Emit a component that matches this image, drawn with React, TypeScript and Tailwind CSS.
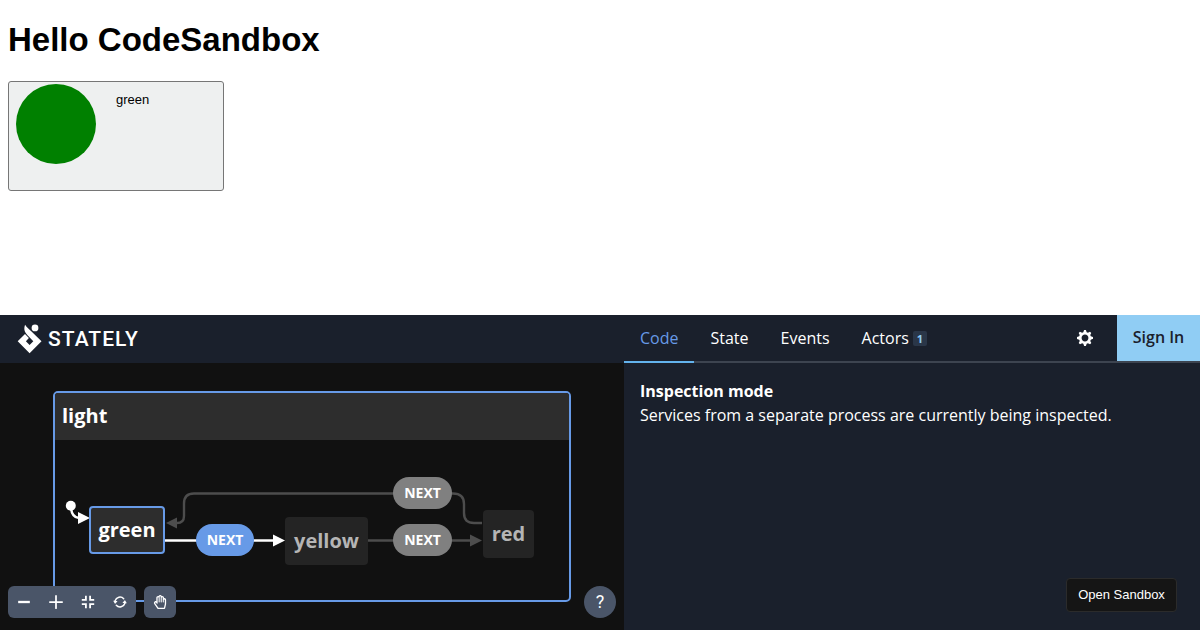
import type { ReactNode } from "react";
import { FaRegHandPaper } from "react-icons/fa";

function StatelyMark() {
  return (
    <svg viewBox="0 0 25 30" className="h-[30px] w-[25px] shrink-0 fill-white" aria-hidden="true">
      <circle cx="18" cy="3.900" r="3.400" />
      <path d="M8.100 0.800 C9.600 3.400 11.800 5 14 7 L24.500 17.300 L12.600 29.200 L0.700 17.300 L8 10 L11.900 13.900 L8.900 17.200 L12.600 20.900 L16.300 17.200 L10.500 11.200 C7 7.700 6.800 4.400 8.100 0.800 Z" />
    </svg>
  );
}

function SettingsIcon() {
  return (
    <svg viewBox="0 0 14 14" className="size-4 fill-current" aria-hidden="true">
      <path d="M14,7.77 L14,6.17 L12.06,5.53 L11.61,4.44 L12.49,2.6 L11.36,1.47 L9.55,2.38 L8.46,1.93 L7.77,0.01 L6.17,0.01 L5.54,1.95 L4.43,2.4 L2.59,1.52 L1.46,2.65 L2.37,4.46 L1.92,5.55 L0,6.23 L0,7.82 L1.94,8.46 L2.39,9.55 L1.51,11.39 L2.64,12.52 L4.45,11.61 L5.54,12.06 L6.23,13.98 L7.82,13.98 L8.45,12.04 L9.56,11.59 L11.4,12.47 L12.53,11.34 L11.61,9.53 L12.08,8.44 L14,7.75 L14,7.77 Z M7,10 C5.34,10 4,8.66 4,7 C4,5.34 5.34,4 7,4 C8.66,4 10,5.34 10,7 C10,8.66 8.66,10 7,10 Z" />
    </svg>
  );
}

function MinusIcon() {
  return (
    <svg viewBox="0 0 24 24" className="size-3.5 fill-current" aria-hidden="true">
      <rect x="2" y="10" width="20" height="4" />
    </svg>
  );
}

function AddIcon() {
  return (
    <svg viewBox="0 0 24 24" className="size-3.5 fill-current" aria-hidden="true">
      <path d="M0,12a1.5,1.5,0,0,0,1.5,1.5h8.75a.25.25,0,0,1,.25.25V22.5a1.5,1.5,0,0,0,3,0V13.75a.25.25,0,0,1,.25-.25H22.5a1.5,1.5,0,0,0,0-3H13.75a.25.25,0,0,1-.25-.25V1.5a1.5,1.5,0,0,0-3,0v8.75a.25.25,0,0,1-.25.25H1.5A1.5,1.5,0,0,0,0,12Z" />
    </svg>
  );
}

function FitIcon() {
  return (
    <svg viewBox="0 0 14 14" className="size-3.5 fill-none stroke-current" strokeWidth="1.800" aria-hidden="true">
      <path d="M4.900 0.800v4.100H0.800M9.100 0.800v4.100h4.100M4.900 13.200V9.100H0.800M9.100 13.200V9.100h4.100" />
    </svg>
  );
}

function RepeatIcon() {
  return (
    <svg viewBox="0 0 24 24" className="size-3.5 fill-current" aria-hidden="true">
      <path d="M10.319,4.936a7.239,7.239,0,0,1,7.1,2.252,1.25,1.25,0,1,0,1.872-1.657A9.737,9.737,0,0,0,9.743,2.5,10.269,10.269,0,0,0,2.378,9.61a.249.249,0,0,1-.271.178l-1.033-.13A.491.491,0,0,0,.6,9.877a.5.5,0,0,0-.019.526l2.476,4.342a.5.5,0,0,0,.373.248.43.43,0,0,0,.062,0,.5.5,0,0,0,.359-.152l3.477-3.593a.5.5,0,0,0-.3-.844L5.15,10.172a.25.25,0,0,1-.2-.333A7.7,7.7,0,0,1,10.319,4.936Z" />
      <path d="M23.406,14.1a.5.5,0,0,0,.015-.526l-2.5-4.329A.5.5,0,0,0,20.546,9a.489.489,0,0,0-.421.151l-3.456,3.614a.5.5,0,0,0,.3.842l1.848.221a.249.249,0,0,1,.183.117.253.253,0,0,1,.023.216,7.688,7.688,0,0,1-5.369,4.9,7.243,7.243,0,0,1-7.1-2.253,1.25,1.25,0,1,0-1.872,1.656,9.74,9.74,0,0,0,9.549,3.03,10.261,10.261,0,0,0,7.369-7.12.251.251,0,0,1,.27-.179l1.058.127a.422.422,0,0,0,.06,0A.5.5,0,0,0,23.406,14.1Z" />
    </svg>
  );
}

function ToolButton({ label, children }: { label: string; children: ReactNode }) {
  return (
    <button type="button" aria-label={label} className="flex size-8 items-center justify-center">
      {children}
    </button>
  );
}

const eventPill =
  "absolute flex h-8 items-center justify-center rounded-full text-sm leading-5 font-bold text-white";
const stateNode =
  "absolute flex h-12 items-center justify-center rounded text-xl leading-7 font-bold";

function Machine() {
  return (
    <>
      <section className="absolute top-7 left-[53px] h-[211px] w-[518px] rounded-[5px] border-2 border-[#679ae7]">
        <h2 className="flex h-[47px] items-center rounded-t-[3px] bg-[#2d2d2d] px-[7px] pb-0.5 text-xl font-bold text-white">
          light
        </h2>
      </section>
      <svg
        width="624"
        height="267"
        viewBox="0 363 624 267"
        className="absolute top-0 left-0 fill-none"
        strokeWidth="2.4"
        aria-hidden="true"
      >
        <g stroke="#4d4d4d">
          <path d="M482 523 H474 Q464 523 464 513 V504 Q464 493.500 453 493.500 H194 Q184 493.500 184 503.500 V516 Q184 523 177 523" />
          <path d="M368 540.500 H471" />
        </g>
        <g fill="#4d4d4d">
          <path d="M166 523 L177 517.500 V528.500 Z" />
          <path d="M482 540.500 L470 534.500 V546.500 Z" />
        </g>
        <g stroke="#fff">
          <path d="M165 540.500 H274" />
          <path d="M71 508 Q72 517.500 79 518" />
        </g>
        <g fill="#fff">
          <circle cx="70.800" cy="505.800" r="5" />
          <path d="M90 518 L78 512 V524 Z" />
          <path d="M285 540.500 L273 534.500 V546.500 Z" />
        </g>
      </svg>
      <div className={`${stateNode} top-[143px] left-[89px] w-[76px] border-2 border-[#679ae7] bg-[#2d2d2d] text-white`}>
        green
      </div>
      <div className={`${stateNode} top-[154px] left-[285px] w-[83px] bg-[#242424] text-[#b5b5b5]`}>yellow</div>
      <div className={`${stateNode} top-[147px] left-[483px] w-[51px] bg-[#242424] text-[#b5b5b5]`}>red</div>
      <button type="button" className={`${eventPill} top-[161px] left-[196px] w-[58px] bg-[#679ae7]`}>
        NEXT
      </button>
      <button type="button" className={`${eventPill} top-[114px] left-[393px] w-[59px] bg-[#808080]`}>
        NEXT
      </button>
      <button type="button" className={`${eventPill} top-[161px] left-[393px] w-[59px] bg-[#808080]`}>
        NEXT
      </button>
    </>
  );
}

function Tab({ active = false, children }: { active?: boolean; children: ReactNode }) {
  return (
    <button
      type="button"
      role="tab"
      aria-selected={active}
      className={
        active
          ? "-mb-0.5 flex items-center border-b-2 border-[#63b3ed] px-4 text-[#679ae7]"
          : "-mb-0.5 flex items-center border-b-2 border-transparent px-4"
      }
    >
      {children}
    </button>
  );
}

export default function App() {
  return (
    <div className="flex min-h-screen flex-col">
      <main className="min-h-[315px] flex-1 bg-white px-2 pt-[21px] font-['Liberation_Sans',sans-serif] text-black">
        <h1 className="text-[33px] leading-[38px] font-bold">Hello CodeSandbox</h1>
        <button
          type="button"
          className="mt-[22px] flex h-[110px] w-[216px] items-start gap-5 rounded-[3px] border border-[#767676] bg-[#eef0f0] px-[7px] py-0.5 text-[13px] leading-[15px]"
        >
          <span className="size-20 rounded-full bg-[#008000]" />
          <span className="pt-2">green</span>
        </button>
      </main>

      <div className="flex min-h-[315px] flex-1 font-['Open_Sans','Noto_Sans',sans-serif] text-base text-white">
        <div className="flex w-[52%] flex-col bg-[#111]">
          <header className="flex h-12 shrink-0 items-center bg-[#1a202c] pl-[17px]">
            <a href="#home" className="flex items-center gap-1.5" aria-label="Stately">
              <StatelyMark />
              <span className="font-['Roboto',sans-serif] text-[21px] leading-6 font-medium tracking-wider">
                STATELY
              </span>
            </a>
          </header>
          <div className="relative flex flex-1 items-end justify-between overflow-hidden p-2 pb-3">
            <Machine />
            <div className="relative flex gap-2">
              <div className="flex rounded-md bg-[#4a5568]">
                <ToolButton label="Zoom out">
                  <MinusIcon />
                </ToolButton>
                <ToolButton label="Zoom in">
                  <AddIcon />
                </ToolButton>
                <ToolButton label="Fit to view">
                  <FitIcon />
                </ToolButton>
                <ToolButton label="Reset view">
                  <RepeatIcon />
                </ToolButton>
              </div>
              <div className="flex rounded-md bg-[#4a5568]">
                <ToolButton label="Pan">
                  <FaRegHandPaper className="size-3.5" />
                </ToolButton>
              </div>
            </div>
            <button
              type="button"
              aria-label="Help"
              className="relative size-8 rounded-full bg-[#4a5568] font-['Roboto',sans-serif] text-lg"
            >
              ?
            </button>
          </div>
        </div>

        <div className="flex w-[48%] flex-col bg-[#1a202c]">
          <div className="flex h-12 shrink-0 border-b-2 border-[#3d4450]">
            <div role="tablist" className="flex">
              <Tab active>Code</Tab>
              <Tab>State</Tab>
              <Tab>Events</Tab>
              <Tab>
                Actors
                <span className="ml-1 rounded-xs bg-[#2a3648] px-1 text-[11px] leading-[15px] font-bold text-[#90cdf4]">
                  1
                </span>
              </Tab>
            </div>
            <button type="button" aria-label="Settings" className="mr-3 ml-auto flex w-10 items-center justify-center">
              <SettingsIcon />
            </button>
            <button type="button" className="w-[83px] bg-[#90cdf4] pb-0.5 font-semibold text-[#1a202c]">
              Sign In
            </button>
          </div>
          <div className="flex-1 p-4 leading-6">
            <p className="font-bold">Inspection mode</p>
            <p>Services from a separate process are currently being inspected.</p>
          </div>
          <div className="flex justify-end pr-[23px] pb-[18px]">
            <a
              href="#sandbox"
              className="flex h-[34px] w-[111px] items-center justify-center rounded border border-[#2b2b2b] bg-[#151515] font-['Liberation_Sans',sans-serif] text-[13px]"
            >
              Open Sandbox
            </a>
          </div>
        </div>
      </div>
    </div>
  );
}
